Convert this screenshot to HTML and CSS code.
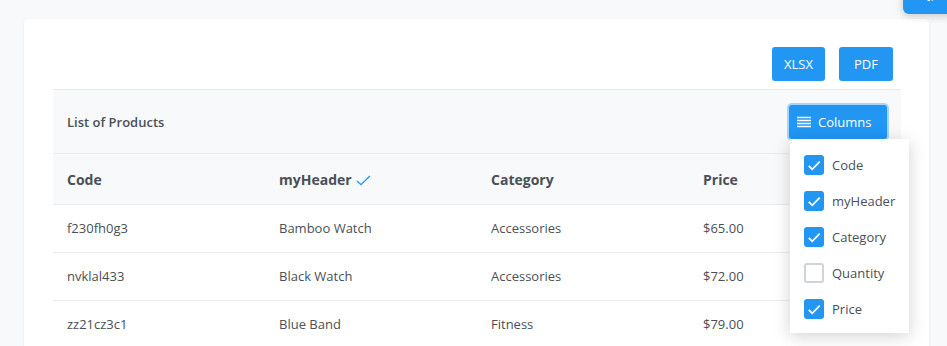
FILE: index.html
```html
<!DOCTYPE html>
<html lang="en">

<head>
  <meta charset="UTF-8">
  <meta name="viewport" content="width=device-width, initial-scale=1.0">
  <title>DataTable - Export</title>
  <link rel="stylesheet" href="styles.css">
</head>

<body>
  <button class="config-button" aria-label="Config">
    <svg viewBox="0 0 16 16" width="16" height="16">
      <circle cx="8" cy="8" r="5" fill="none" stroke="#fff" stroke-width="2.4" stroke-dasharray="2.2 1.7"></circle>
      <circle cx="8" cy="8" r="2" fill="#fff"></circle>
    </svg>
  </button>

  <main class="card">
    <div class="toolbar">
      <button class="btn btn-xlsx">XLSX</button>
      <button class="btn btn-pdf">PDF</button>
    </div>

    <section class="datatable">
      <header class="datatable-header">
        <span class="caption">List of Products</span>

        <div class="multiselect">
          <button class="btn btn-columns">
            <svg class="bars" viewBox="0 0 14 14" width="14" height="14">
              <path d="M0 2.5h14M0 5.5h14M0 8.5h14M0 11.5h14" stroke="#fff" stroke-width="1.3"></path>
            </svg>
            Columns
          </button>

          <ul class="multiselect-panel">
            <li class="option"><span class="checkbox checked"></span>Code</li>
            <li class="option"><span class="checkbox checked"></span>myHeader</li>
            <li class="option"><span class="checkbox checked"></span>Category</li>
            <li class="option"><span class="checkbox"></span>Quantity</li>
            <li class="option"><span class="checkbox checked"></span>Price</li>
          </ul>
        </div>
      </header>

      <table class="table">
        <thead>
          <tr>
            <th>Code</th>
            <th>myHeader
              <svg class="th-check" viewBox="0 0 16 12" width="15" height="11">
                <path d="M1 6.5l4.2 4L15 1" fill="none" stroke="#2196f3" stroke-width="1.4"></path>
              </svg>
            </th>
            <th>Category</th>
            <th>Price</th>
          </tr>
        </thead>
        <tbody>
          <tr>
            <td>f230fh0g3</td>
            <td>Bamboo Watch</td>
            <td>Accessories</td>
            <td>$65.00</td>
          </tr>
          <tr>
            <td>nvklal433</td>
            <td>Black Watch</td>
            <td>Accessories</td>
            <td>$72.00</td>
          </tr>
          <tr>
            <td>zz21cz3c1</td>
            <td>Blue Band</td>
            <td>Fitness</td>
            <td>$79.00</td>
          </tr>
        </tbody>
      </table>
    </section>
  </main>
</body>

</html>
```

FILE: styles.css
```css
*,
*::before,
*::after {
  box-sizing: border-box;
}

html,
body {
  height: 100%;
  overflow: hidden;
}

body {
  font-family: 'Open Sans', 'Noto Sans', sans-serif;
  font-size: 13px;
  color: #495057;
  background: #f8f9fa;
  margin: 0;
  padding: 19px 18px 0 24px;
  position: relative;
}

.config-button {
  position: absolute;
  top: -38px;
  right: -10px;
  width: 54px;
  height: 52px;
  border: 0;
  border-radius: 6px;
  background: #2196f3;
  box-shadow: 0 2px 8px rgba(0, 0, 0, .2);
  display: flex;
  align-items: flex-end;
  padding: 0 0 11px 19px;

  svg {
    display: block;
  }
}

.card {
  background: #fff;
  border-radius: 4px;
  box-shadow: 0 1px 3px rgba(0, 0, 0, .08);
  padding: 28px 28px 40px 29px;
  min-height: 400px;
}

.btn {
  font-family: inherit;
  font-size: 13px;
  color: #fff;
  background: #2196f3;
  border: 0;
  border-radius: 3px;
  height: 34px;
  padding: 0 12px;
  cursor: pointer;
}

.btn-xlsx {
  width: 53px;
}

.btn-pdf {
  width: 54px;
}

.toolbar {
  display: flex;
  justify-content: flex-end;
  gap: 14px;
  padding-right: 8px;
  margin-bottom: 8px;
}

.datatable-header {
  display: flex;
  align-items: center;
  justify-content: space-between;
  height: 65px;
  padding: 0 14px;
  background: #f8f9fa;
  border-top: 1px solid #e9ecef;
  border-bottom: 1px solid #e9ecef;

  .caption {
    font-weight: 600;
  }
}

.multiselect {
  position: relative;
}

.btn-columns {
  display: flex;
  align-items: center;
  gap: 7px;
  width: 98px;
  padding: 0 8px;
  box-shadow: 0 0 0 2px #a6d5fa;
}

.multiselect-panel {
  position: absolute;
  top: 34px;
  left: 1px;
  width: 119px;
  margin: 0;
  padding: 8px 0 6px;
  list-style: none;
  background: #fff;
  box-shadow: 0 3px 16px rgba(0, 0, 0, .18);
  z-index: 2;

  .option {
    display: flex;
    align-items: center;
    gap: 8px;
    height: 36px;
    padding: 0 14px;
  }
}

.checkbox {
  width: 20px;
  height: 20px;
  border: 2px solid #ced4da;
  border-radius: 3px;
  background: #fff;
  flex-shrink: 0;

  &.checked {
    border-color: #2196f3;
    background: #2196f3 url("data:image/svg+xml,%3Csvg xmlns='http://www.w3.org/2000/svg' viewBox='0 0 16 16'%3E%3Cpath d='M3 8.5l3.2 3.2L13 4.8' fill='none' stroke='%23fff' stroke-width='1.6'/%3E%3C/svg%3E") center / 17px no-repeat;
  }
}

.table {
  width: 100%;
  border-collapse: collapse;
  table-layout: fixed;

  th,
  td {
    text-align: left;
    padding: 0 14px;
    border-bottom: 1px solid #e9ecef;
  }

  th {
    height: 50px;
    font-size: 14px;
    font-weight: 700;
    background: #f8f9fa;
    padding-top: 2px;
  }

  td {
    height: 48px;
  }

  .th-check {
    vertical-align: -1px;
    margin-left: 1px;
  }
}
```
